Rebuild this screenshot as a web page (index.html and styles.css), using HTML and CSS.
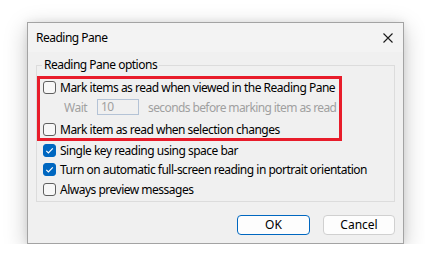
FILE: index.html
```html
<!DOCTYPE html>
<html lang="en">
<head>
<meta charset="utf-8">
<title>Reading Pane</title>
<link rel="stylesheet" href="styles.css">
</head>
<body>
<div class="dialog">
  <div class="titlebar">
    <span class="title">Reading Pane</span>
    <svg class="close" width="10" height="10" viewBox="0 0 10 10"><path d="M0.5 0.5L9.5 9.5M9.5 0.5L0.5 9.5" stroke="#1a1a1a" stroke-width="1.1" fill="none"/></svg>
  </div>
  <div class="content">
    <fieldset class="group">
      <legend class="legend">Reading Pane options</legend>
      <div class="highlight">
        <label class="row"><span class="box"></span><span class="label">Mark items as read when viewed in the Reading Pane</span></label>
        <div class="row wait"><span class="wait-label">Wait</span><span class="input">10</span><span class="wait-text">seconds before marking item as read</span></div>
        <label class="row row-last"><span class="box"></span><span class="label">Mark item as read when selection changes</span></label>
      </div>
      <div class="rows">
        <label class="row"><span class="box checked"><svg width="13" height="13" viewBox="0 0 13 13"><path d="M3.3 6.8L5.4 8.9L9.8 4.4" stroke="#fff" stroke-width="1.2" fill="none"/></svg></span><span class="label">Single key reading using space bar</span></label>
        <label class="row"><span class="box checked"><svg width="13" height="13" viewBox="0 0 13 13"><path d="M3.3 6.8L5.4 8.9L9.8 4.4" stroke="#fff" stroke-width="1.2" fill="none"/></svg></span><span class="label">Turn on automatic full-screen reading in portrait orientation</span></label>
        <label class="row"><span class="box"></span><span class="label">Always preview messages</span></label>
      </div>
    </fieldset>
    <div class="footer">
      <button class="btn primary">OK</button>
      <button class="btn">Cancel</button>
    </div>
  </div>
</div>
</body>
</html>
```

FILE: styles.css
```css
html, body {
  margin: 0;
  padding: 0;
  background: #ffffff;
}
body {
  font-family: "Noto Sans", "Open Sans", sans-serif;
  font-size: 12px;
  letter-spacing: -0.5px;
  color: #000;
}
.dialog {
  margin: 22px 0 0 27px;
  width: 377px;
  height: 222px;
  box-sizing: border-box;
  border: 1px solid #a3a3a3;
  background: #f0f0f0;
  box-shadow: 0 6px 22px rgba(0,0,0,0.22), 0 0 8px rgba(0,0,0,0.08);
  display: flex;
  flex-direction: column;
}
.titlebar {
  height: 29px;
  background: #f3f3f3;
  display: flex;
  align-items: center;
  justify-content: space-between;
  padding: 0 10px 0 8px;
}
.title {
  font-size: 12px;
  line-height: 16px;
}
.close {
  display: block;
}
.content {
  flex: 1;
  padding: 5px 8px 0 8px;
  display: flex;
  flex-direction: column;
}
.group {
  margin: 0;
  padding: 0 0 4px 0;
  border: 1px solid #dcdcdc;
  min-width: 0;
}
.legend {
  margin-left: 5px;
  padding: 0 2px;
  line-height: 16px;
}
.highlight {
  margin-top: 3px;
  width: 305px;
  box-sizing: border-box;
  border: 3px solid #e81c2a;
  padding: 0 0 0 3px;
  display: flex;
  flex-direction: column;
  gap: 4px;
}
.row {
  display: flex;
  align-items: center;
  height: 16px;
  white-space: nowrap;
}
.row > * {
  flex: none;
}
.row-last {
  margin-top: 2px;
  margin-bottom: 1px;
}
.box {
  width: 13px;
  height: 13px;
  box-sizing: border-box;
  border: 1px solid #5f5f5f;
  border-radius: 3px;
  background: #f7f7f7;
  margin-right: 4px;
}
.box.checked {
  background: #0067c0;
  border-color: #0067c0;
}
.box.checked svg {
  display: block;
  margin: -1px;
}
.wait {
  color: #a0a0a0;
}
.wait-label {
  margin-left: 21px;
  width: 33px;
}
.input {
  width: 42px;
  height: 16px;
  box-sizing: border-box;
  border: 1px solid #b4c3d6;
  padding-left: 3px;
  line-height: 14px;
  color: #a0a0a0;
  margin-right: 9px;
}
.wait-text {
  letter-spacing: -0.6px;
}
.rows {
  display: flex;
  flex-direction: column;
  gap: 3.5px;
  padding: 1px 0 0 6px;
}
.footer {
  display: flex;
  justify-content: flex-end;
  gap: 13px;
  margin-top: 13px;
}
.btn {
  font-family: inherit;
  font-size: 12px;
  letter-spacing: 0;
  height: 20px;
  width: 72px;
  box-sizing: border-box;
  border: 1px solid #d0d0d0;
  border-radius: 4px;
  background: #fdfdfd;
  color: #000;
  padding: 0;
  line-height: 16px;
}
.btn.primary {
  width: 73px;
  border-color: #0067c0;
}
```
